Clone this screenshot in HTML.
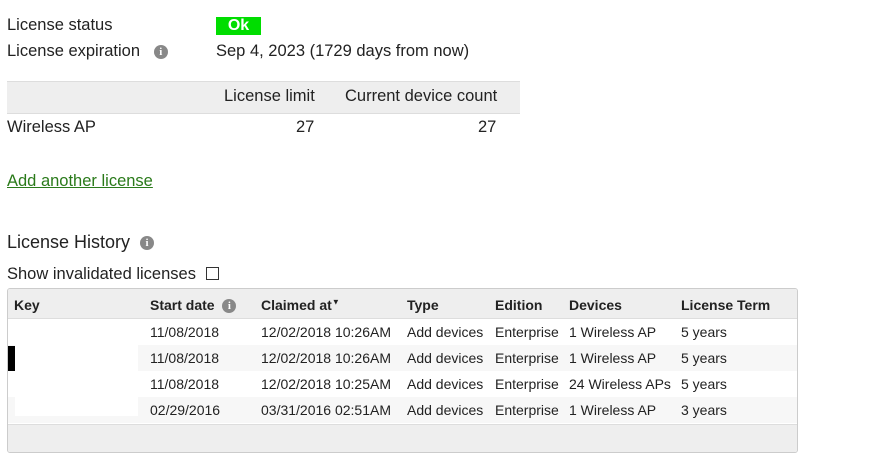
<!DOCTYPE html><html><head><style>
body{margin:0;background:#fff;font-family:"Liberation Sans",sans-serif;font-size:16.5px;color:#222;width:883px;height:471px;position:relative;overflow:hidden}
.a{position:absolute;white-space:nowrap}
.i{display:inline-block;width:14px;height:14px;border-radius:50%;background:#888;color:#fff;font:bold 11px/14px "Liberation Serif",serif;text-align:center;vertical-align:middle}
.t{position:absolute;left:7px;top:288px;width:789px;height:163px;border:1px solid #ccc;border-radius:3px;background:#fff;font-size:14px;overflow:hidden}
.t .r{position:absolute;left:0;width:789px;height:26px}
.t span{position:absolute;top:5px}
</style></head><body>
<div class="a" style="left:7px;top:16px">License status</div>
<div class="a" style="left:216px;top:17px;width:45px;height:18px;background:#00dd00;color:#fff;font-weight:bold;text-align:center;line-height:18px;font-size:16px">Ok</div>
<div class="a" style="left:7px;top:42px">License expiration &nbsp; <span class="i">i</span></div>
<div class="a" style="left:216px;top:42px">Sep 4, 2023 (1729 days from now)</div>
<div class="a" style="left:7px;top:81px;width:513px;height:31px;background:#eee;border-top:1px solid #ddd;border-bottom:1px solid #ddd"></div>
<div class="a" style="left:224px;top:87px">License limit</div>
<div class="a" style="left:345px;top:87px">Current device count</div>
<div class="a" style="left:7px;top:118px">Wireless AP</div>
<div class="a" style="left:296px;top:118px">27</div>
<div class="a" style="left:478px;top:118px">27</div>
<div class="a" style="left:7px;top:172px;color:#2a7a1a;text-decoration:underline">Add another license</div>
<div class="a" style="left:7px;top:232px;font-size:18px">License History &nbsp;<span class="i">i</span></div>
<div class="a" style="left:7px;top:265px">Show invalidated licenses <span style="display:inline-block;width:11px;height:11px;border:1px solid #333;vertical-align:-1px;margin-left:5px"></span></div>
<div class="t">
<div class="r" style="top:0;height:29px;background:#eee;border-bottom:1px solid #ddd;font-weight:bold"><span style="left:6px;top:8px">Key</span><span style="left:142px;top:8px">Start date &nbsp;<span class="i" style="position:static">i</span></span><span style="left:253px;top:8px">Claimed at<sup style="font-size:8px">▼</sup></span><span style="left:399px;top:8px">Type</span><span style="left:487px;top:8px">Edition</span><span style="left:561px;top:8px">Devices</span><span style="left:673px;top:8px">License Term</span></div>
<div class="r" style="top:30px"><span style="left:142px">11/08/2018</span><span style="left:253px">12/02/2018 10:26AM</span><span style="left:399px">Add devices</span><span style="left:487px">Enterprise</span><span style="left:561px">1 Wireless AP</span><span style="left:673px">5 years</span></div>
<div class="r" style="top:56px;background:#f7f7f7"><span style="left:142px">11/08/2018</span><span style="left:253px">12/02/2018 10:26AM</span><span style="left:399px">Add devices</span><span style="left:487px">Enterprise</span><span style="left:561px">1 Wireless AP</span><span style="left:673px">5 years</span></div>
<div class="r" style="top:82px"><span style="left:142px">11/08/2018</span><span style="left:253px">12/02/2018 10:25AM</span><span style="left:399px">Add devices</span><span style="left:487px">Enterprise</span><span style="left:561px">24 Wireless APs</span><span style="left:673px">5 years</span></div>
<div class="r" style="top:108px;background:#f7f7f7"><span style="left:142px">02/29/2016</span><span style="left:253px">03/31/2016 02:51AM</span><span style="left:399px">Add devices</span><span style="left:487px">Enterprise</span><span style="left:561px">1 Wireless AP</span><span style="left:673px">3 years</span></div>
<div style="position:absolute;left:7px;top:30px;width:123px;height:97px;background:#fff"></div>
<div style="position:absolute;left:0;top:57px;width:7px;height:25px;background:#000"></div>
<div class="r" style="top:135px;height:28px;background:#eee;border-top:1px solid #ddd"></div>
</div>
</body></html>
